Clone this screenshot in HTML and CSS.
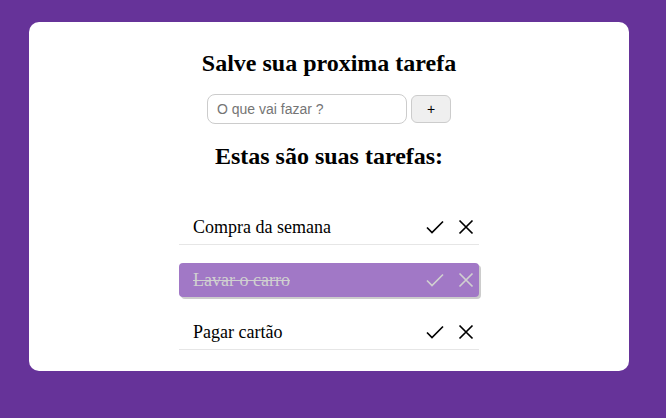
FILE: index.html
```html
<!DOCTYPE html>
<html lang="pt-BR">
<head>
  <meta charset="UTF-8">
  <meta name="viewport" content="width=device-width, initial-scale=1.0">
  <title>Tarefas</title>
  <link rel="stylesheet" href="styles.css">
</head>
<body>
  <div class="app">
    <h2>Salve sua proxima tarefa</h2>
    <form class="task-form">
      <input type="text" placeholder="O que vai fazar ?">
      <button type="submit">+</button>
    </form>
    <h2>Estas são suas tarefas:</h2>
    <ul class="task-list">
      <li class="task">
        <span class="task-name">Compra da semana</span>
        <span class="task-actions">
          <svg viewBox="0 0 24 24"><path d="M4 12.5l5 5L20 6.5"/></svg>
          <svg viewBox="0 0 24 24"><path d="M5.5 5.5l13 13M18.5 5.5l-13 13"/></svg>
        </span>
      </li>
      <li class="task done">
        <span class="task-name">Lavar o carro</span>
        <span class="task-actions">
          <svg viewBox="0 0 24 24"><path d="M4 12.5l5 5L20 6.5"/></svg>
          <svg viewBox="0 0 24 24"><path d="M5.5 5.5l13 13M18.5 5.5l-13 13"/></svg>
        </span>
      </li>
      <li class="task">
        <span class="task-name">Pagar cartão</span>
        <span class="task-actions">
          <svg viewBox="0 0 24 24"><path d="M4 12.5l5 5L20 6.5"/></svg>
          <svg viewBox="0 0 24 24"><path d="M5.5 5.5l13 13M18.5 5.5l-13 13"/></svg>
        </span>
      </li>
    </ul>
  </div>
</body>
</html>
```

FILE: styles.css
```css
body {
  margin: 0;
  padding: 22px 0 0 29px;
  background-color: #663399;
  font-family: "Liberation Serif", serif;
}
.app {
  width: 600px;
  height: 349px;
  box-sizing: border-box;
  background-color: #fff;
  border-radius: 10px;
  padding: 27px 0 0;
  display: flex;
  flex-direction: column;
  align-items: center;
}
.app h2 {
  margin: 0;
  font-size: 24px;
  line-height: 28px;
}
.task-form {
  display: flex;
  gap: 4px;
  margin: 17px 0 18px;
}
.task-form input {
  width: 200px;
  height: 30px;
  box-sizing: border-box;
  padding: 0 9px;
  border: 1px solid #ccc;
  border-radius: 8px;
  font-family: "Liberation Sans", Arial, sans-serif;
  font-size: 14px;
}
.task-form input::placeholder {
  color: #757575;
}
.task-form button {
  width: 40px;
  height: 28px;
  margin-top: 1px;
  background-color: #efefef;
  border: 1px solid #ccc;
  border-radius: 6px;
  font-family: "Liberation Sans", Arial, sans-serif;
  font-size: 14px;
}
.task-list {
  list-style: none;
  margin: 40px 0 0;
  padding: 0;
  width: 300px;
  display: flex;
  flex-direction: column;
  gap: 18px;
}
.task {
  display: flex;
  align-items: center;
  justify-content: space-between;
  height: 34px;
  padding: 0 1px 0 14px;
  border-bottom: 1px solid #e6e6e6;
  font-size: 18px;
}
.task.done {
  background-color: #a178c6;
  border-bottom: none;
  border-radius: 4px;
  box-shadow: 2px 2px 0 #cccccc;
  color: #d0d0d0;
  text-decoration: line-through;
}
.task-actions {
  display: flex;
  gap: 7px;
}
.task-actions svg {
  width: 24px;
  height: 24px;
  fill: none;
  stroke: #000;
  stroke-width: 1.7;
}
.task.done .task-actions svg {
  stroke: #d0d0d0;
}
```
